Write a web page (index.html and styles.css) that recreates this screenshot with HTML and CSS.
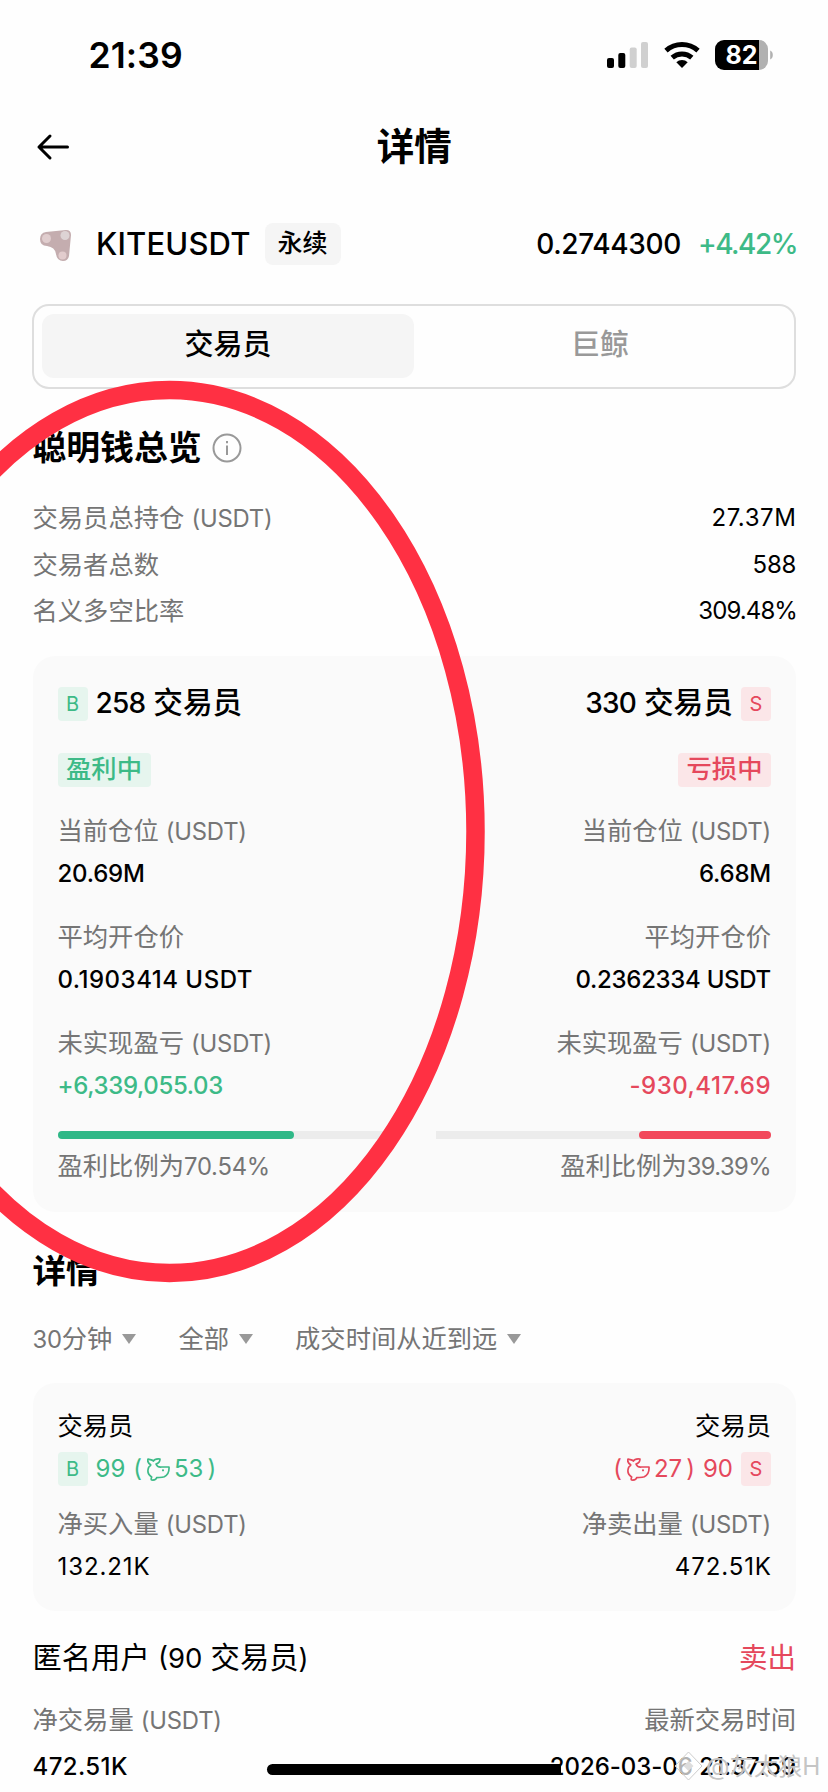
FILE: index.html
```html
<!DOCTYPE html>
<html lang="zh-CN">
<head>
<meta charset="utf-8">
<title>详情</title>
<link rel="stylesheet" href="styles.css">
</head>
<body>
<svg class="defs" width="0" height="0">
  <symbol id="whale" viewBox="0 0 69 69">
    <path d="M11 20C4 16 1 9 3 3c6 3 11 0 16 6 4-7 11-7 20-6 0 8-5 13-12 15 3 8 10 10 17 9h22c1 14-4 24-14 29-7 3-15 2-23 3-1 5-6 8-15 7-3-1-1-5 0-9C3 50 1 38 5 28c2-4 7-4 6-8z" fill="none" stroke="currentColor" stroke-width="5" stroke-linejoin="round"/>
    <circle cx="48" cy="37" r="3.200" fill="currentColor"/>
  </symbol>
</svg>
<div class="screen">
  <header class="status">
    <span class="time">21:39</span>
    <svg class="status-icons" width="168" height="32" viewBox="0 0 168 32">
      <rect x="0" y="18" width="7" height="10" rx="2"/>
      <rect x="11.3" y="13" width="7" height="15" rx="2"/>
      <rect x="22.7" y="7.5" width="7" height="20.5" rx="2" fill="#d0d0d0"/>
      <rect x="34" y="2" width="7" height="26" rx="2" fill="#d0d0d0"/>
      <g fill="none" stroke="#000" stroke-width="5">
        <path d="M59 10.7a24 24 0 0 1 32 0"/>
        <path d="M65.2 17.6a15 15 0 0 1 19.6 0"/>
      </g>
      <path d="M69.3 22.2a8.5 8.5 0 0 1 11.4 0L75 28z"/>
      <path d="M117 0h35v30h-35a9 9 0 0 1-9-9V9a9 9 0 0 1 9-9z"/>
      <path d="M152 0h0a9 9 0 0 1 9 9v12a9 9 0 0 1-9 9z" fill="#b1b1b1"/>
      <path d="M163.200 10.500c3.500 1 3.500 8 0 9z" fill="#b1b1b1"/>
      <text x="134.500" y="24.300" text-anchor="middle" class="battery">82</text>
    </svg>
  </header>

  <nav class="nav">
    <svg width="34" height="28" viewBox="0 0 34 28"><path d="M31.500 14H3M14 3 3 14l11 11" fill="none" stroke="#000" stroke-width="3" stroke-linecap="round" stroke-linejoin="round"/></svg>
    <h1>详情</h1>
  </nav>

  <section class="pair">
    <svg class="coin" width="34" height="34" viewBox="0 0 34 34">
      <path d="M7 3 27 1q5 0 5 5l-2 21q-1 5-6 5-6 0-7-7-1-7-9-8-7 0-7-7 0-6 6-7z" fill="#c4adaf"/>
      <circle cx="7.500" cy="9.500" r="4.500" fill="#e0cdce"/><circle cx="26" cy="6.500" r="4.500" fill="#ddd3d4"/><circle cx="23.500" cy="26.500" r="4" fill="#e2cccd"/>
    </svg>
    <span class="symbol">KITEUSDT</span>
    <span class="pill">永续</span>
    <span class="price">0.2744300</span>
    <span class="change">+4.42%</span>
  </section>

  <div class="tabs"><div class="tab active">交易员</div><div class="tab">巨鲸</div></div>

  <h2 class="overview">聪明钱总览
    <svg width="30" height="30" viewBox="0 0 30 30" fill="none" stroke="#999" stroke-width="2"><circle cx="15" cy="15" r="13.500"/><path d="M15 12.500V22"/><path d="M15 8v2.300"/></svg>
  </h2>

  <div class="stats">
    <div class="stat"><span>交易员总持仓 <i>(USDT)</i></span><b class="wide">27.37M</b></div>
    <div class="stat"><span>交易者总数</span><b class="count">588</b></div>
    <div class="stat"><span>名义多空比率</span><b class="tight">309.48%</b></div>
  </div>

  <section class="card positions">
    <div class="side buy">
      <div class="head"><span class="badge">B</span><span><em>258</em> 交易员</span></div>
      <div class="tag">盈利中</div>
      <div class="label">当前仓位 <i>(USDT)</i></div><div class="value">20.69M</div>
      <div class="label">平均开仓价</div><div class="value long">0.1903414 USDT</div>
      <div class="label">未实现盈亏 <i>(USDT)</i></div><div class="value pnl">+6,339,055.03</div>
      <div class="bar"><div class="fill" style="width:70.54%"></div></div>
      <div class="label ratio">盈利比例为<i>70.54%</i></div>
    </div>
    <div class="side sell">
      <div class="head"><span><em>330</em> 交易员</span><span class="badge">S</span></div>
      <div class="tag">亏损中</div>
      <div class="label">当前仓位 <i>(USDT)</i></div><div class="value">6.68M</div>
      <div class="label">平均开仓价</div><div class="value long">0.2362334 USDT</div>
      <div class="label">未实现盈亏 <i>(USDT)</i></div><div class="value pnl">-930,417.69</div>
      <div class="bar"><div class="fill" style="width:39.39%"></div></div>
      <div class="label ratio">盈利比例为<i>39.39%</i></div>
    </div>
  </section>

  <h2 class="detail">详情</h2>
  <div class="filters">
    <span class="filter"><span><i>30</i>分钟</span></span>
    <span class="filter">全部</span>
    <span class="filter">成交时间从近到远</span>
  </div>

  <section class="card net">
    <div class="side buy">
      <div class="caption">交易员</div>
      <div class="counts"><span class="badge">B</span><span>99</span><span class="group">(<svg><use href="#whale"/></svg>53<u>)</u></span></div>
      <div class="label">净买入量 <i>(USDT)</i></div><div class="value">132.21K</div>
    </div>
    <div class="side sell">
      <div class="caption">交易员</div>
      <div class="counts"><span class="group">(<svg><use href="#whale"/></svg>27<u>)</u></span><span>90</span><span class="badge">S</span></div>
      <div class="label">净卖出量 <i>(USDT)</i></div><div class="value">472.51K</div>
    </div>
  </section>

  <section class="trade">
    <div class="row who"><span>匿名用户 <i>(90</i> 交易员<i>)</i></span><span class="red">卖出</span></div>
    <div class="row muted"><span>净交易量 <i>(USDT)</i></span><span>最新交易时间</span></div>
    <div class="row amounts"><span>472.51K</span><span class="date">2026-03-06 21:37:59</span></div>
  </section>

  <div class="home"></div>
  <div class="watermark">
    <svg width="27" height="28" viewBox="0 0 27 28"><path d="M13.500 0 27 14 13.500 28 0 14z" fill="#fff" fill-opacity=".7" stroke="#ccc" stroke-width="1"/><path d="m13.500 9 5 5-5 5-5-5z" fill="#ddd"/></svg>
    <span>@灰太狼H</span>
  </div>
  <svg class="ring" width="828" height="1792" viewBox="0 0 828 1792"><ellipse cx="169.500" cy="831.500" rx="306" ry="441.500" fill="none" stroke="#ff3043" stroke-width="18.500"/></svg>
</div>
</body>
</html>
```
FILE: styles.css
```css
* { box-sizing: border-box; }
body { margin: 0; background: #fefefe; color: #000; }
.screen {
  position: relative;
  width: 828px;
  height: 1792px;
  overflow: hidden;
  padding: 0 32px 0 32.500px;
  font: 400 25.3px/40px Inter, "Noto Sans CJK SC", sans-serif;
}
.defs { position: absolute; }
i, em, b, u { font-style: normal; font-weight: inherit; text-decoration: none; }

.status { display: flex; justify-content: space-between; height: 98px; padding: 36px 21px 0 56px; }
.time { font-size: 35.500px; font-weight: 600; letter-spacing: .1px; }
.status-icons { margin-top: 4px; }
.battery { font: 700 25px Inter, sans-serif; fill: #fff; }

.nav { display: flex; align-items: center; height: 97px; padding-left: 3px; }
.nav h1 { flex: 1; margin: 0 37px 0 0; text-align: center; font-size: 37.5px; font-weight: 600; }

.pair { display: flex; align-items: center; height: 98px; }
.coin { margin: 3px 0 0 6px; }
.symbol { margin-left: 23.500px; font-size: 31px; font-weight: 500; letter-spacing: .15px; }
.pill { margin-left: 14px; width: 76px; height: 42px; border-radius: 8px; background: #f5f5f5; text-align: center; font-size: 25px; font-weight: 500; line-height: 41px; }
.price { margin-left: auto; font-size: 28px; font-weight: 500; letter-spacing: -.35px; }
.change { margin: 0 -1px 0 17px; font-size: 28px; font-weight: 500; letter-spacing: -1.500px; color: #3dba87; }

.tabs { display: grid; grid-template-columns: 1fr 1fr; height: 85px; margin: 11px 0 0 -.5px; padding: 8px; border: 2px solid #dedede; border-radius: 17px; }
.tab { height: 64px; border-radius: 12px; text-align: center; font-size: 29px; font-weight: 500; line-height: 62px; color: #999; }
.tab.active { background: #f5f5f5; color: #000; }

.overview { display: flex; align-items: center; gap: 11px; height: 40px; margin: 39px 0 0; font-size: 33.800px; font-weight: 600; }
.stats { margin-top: 27px; }
.stat { display: flex; justify-content: space-between; height: 46.700px; line-height: 46.700px; color: #757575; }
.stat b { color: #000; font-size: 24px; }
.stat b.wide { letter-spacing: .6px; margin-right: -.6px; }
.stat b.count { letter-spacing: -.3px; }
.stat b.tight { letter-spacing: -.9px; margin-right: -1px; }
.stat i, .label i, .muted i, .filter i { font-size: 23.800px; letter-spacing: -.2px; }

.card { display: grid; grid-template-columns: 1fr 1fr; column-gap: 43px; padding: 0 25px; border-radius: 22px; background: #fafafa; }
.side { display: flex; flex-direction: column; align-items: flex-start; }
.sell { align-items: flex-end; }
.positions { height: 556px; margin-top: 20.900px; padding-top: 28px; }
.head { display: flex; align-items: center; gap: 8px; height: 40px; font-size: 29.700px; font-weight: 500; }
.head em { font-size: 28px; letter-spacing: -.8px; }
.head span:not(.badge) { margin-top: -2px; }
.badge { width: 30px; height: 34px; border-radius: 4px; text-align: center; font-size: 20px; font-weight: 400; line-height: 34px; }
.buy .badge, .buy .tag { background: #e6f5ee; color: #3dba87; }
.sell .badge, .sell .tag { background: #fbe6e8; color: #e5485c; }
.tag { width: 93px; height: 34px; margin-top: 29.500px; border-radius: 4px; text-align: center; font-weight: 500; line-height: 32px; }
.label { height: 40px; color: #757575; margin-top: 23px; }
.tag + .label { margin-top: 24px; }
.value { height: 40px; margin-top: 3px; font-size: 24px; font-weight: 500; letter-spacing: -.2px; }
.buy .long { letter-spacing: .5px; }
.sell .long { letter-spacing: -.3px; }
.buy .pnl { letter-spacing: -.35px; }
.sell .pnl { letter-spacing: .5px; }
.buy .pnl, .buy .counts { color: #3dba87; }
.sell .pnl, .sell .counts { color: #e5485c; }
.bar { display: flex; width: 335px; height: 8px; margin-top: 25px; border-radius: 4px; background: #ececec; }
.sell .bar { justify-content: flex-end; border-radius: 0 4px 4px 0; }
.fill { border-radius: 4px; background: #2fb887; }
.sell .fill { background: #f2485b; }
.ratio { margin-top: 7px; }
.sell .ratio i { letter-spacing: -.6px; }

.detail { height: 40px; margin: 38.800px 0 0; font-size: 33.500px; font-weight: 600; }
.filters { display: flex; gap: 42px; height: 40px; margin-top: 28.500px; color: #757575; }
.filter { display: flex; align-items: center; gap: 10px; }
.filter::after { content: ""; border: 7.500px solid transparent; border-top: 10px solid #999; border-bottom: 0; }

.net { height: 228px; margin-top: 24px; padding-top: 22.800px; }
.caption { height: 40px; }
.counts { display: flex; align-items: center; gap: 8px; height: 40px; margin-top: 3px; font-size: 24px; }
.group { display: flex; align-items: center; }
.group svg { width: 23px; height: 23px; margin: 0 4px 0 5px; }
.group u { margin-left: 4px; }
.net .label { margin-top: 15px; }
.net .value { font-weight: 400; letter-spacing: .9px; margin-right: -.9px; }

.row { display: flex; justify-content: space-between; height: 40px; }
.trade { padding-top: 27px; }
.who { font-size: 29.300px; }
.who i { font-size: 27.500px; }
.red { color: #e5485c; font-size: 28.500px; }
.muted { margin-top: 21.500px; color: #757575; }
.amounts { margin-top: 7px; font-size: 24px; font-weight: 500; letter-spacing: .4px; }
.date { letter-spacing: -.05px; }

.home { position: absolute; left: 267px; top: 1764px; width: 294px; height: 11px; border-radius: 6px 0 0 6px; background: #000; }
.watermark { position: absolute; left: 675px; top: 1749px; display: flex; align-items: center; gap: 4px; font-size: 24.300px; line-height: 34px; color: #b5b5b5cc; text-shadow: 0 0 1px #fff; white-space: nowrap; }
.ring { position: absolute; left: 0; top: 0; }
```
